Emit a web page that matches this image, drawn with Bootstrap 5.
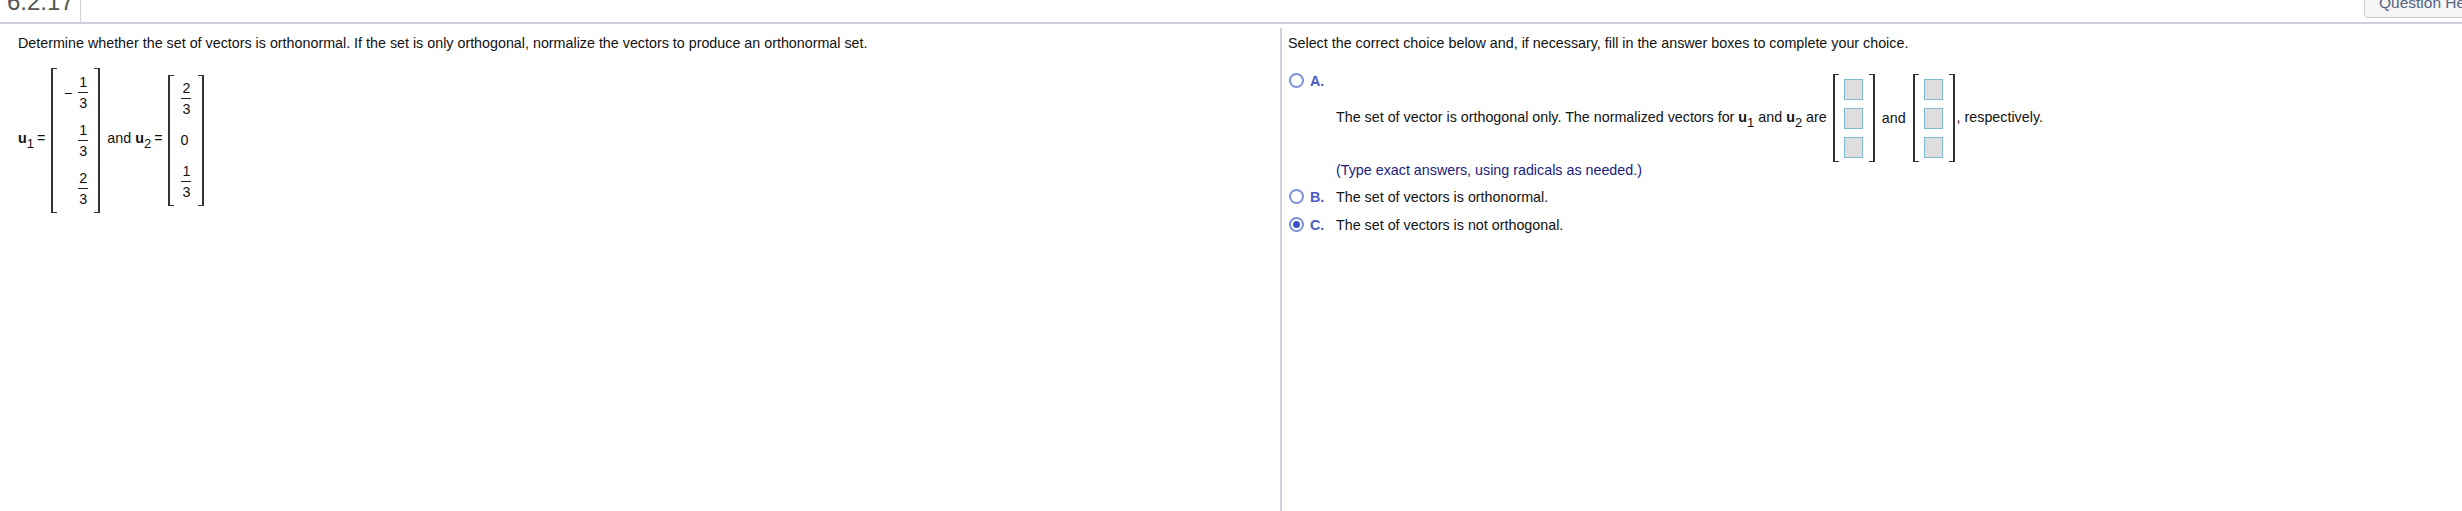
<!DOCTYPE html>
<html lang="en"><head><meta charset="utf-8"><title>6.2.17</title>
<link href="https://cdn.jsdelivr.net/npm/bootstrap@5.3.0/dist/css/bootstrap.min.css" rel="stylesheet">
<style>
html,body{height:100%;overflow:hidden;background:#fff}
body{font-family:"Liberation Sans",Arial,sans-serif;font-size:14.3px;color:#111;line-height:16px}
.top-bar{height:24px;border-bottom:2px solid #cfd2dc;overflow:hidden}
.top-title{width:81px;height:32px;margin-top:-10px;border-right:1px solid #cfd2dc;font-size:24px;line-height:24px;color:#555;padding-left:7px;white-space:nowrap}
.help-btn{width:110px;height:19px;margin-top:-1px;margin-right:-12px;background:#f5f5f5;border:1px solid #ccc;border-radius:0 0 4px 4px;color:#56657f;font-size:15.5px;line-height:15px;padding-left:14px;white-space:nowrap;overflow:hidden}
.help-txt{margin-top:-5px;display:block}
.main-row{height:487px}
.pane-left{width:1280px;flex:none;padding:11px 18px 0}
.pane-right{flex:1;border-left:2px solid #cfd2dc;margin-top:4px;padding:7px 0 0 6px}
.mtx{display:flex;align-items:stretch;flex:none}
.brk{width:6px;flex:none;border:solid #333;border-width:1.5px 0 1.5px 2px}
.brk-r{border-width:1.5px 2px 1.5px 0}
.cells{display:flex;flex-direction:column;justify-content:center;flex:1}
.cell{height:48px;display:flex;align-items:center;justify-content:flex-end;padding-right:6px}
.m2 .cell{height:41.5px;justify-content:center;padding-right:0}
.m2 .cell.zero{padding-right:4px;padding-bottom:2px}
.frac{display:inline-flex;flex-direction:column;align-items:center;width:10px;line-height:15px}
.frac>span:first-child{border-bottom:1px solid #222;width:100%;text-align:center;padding-bottom:2px;margin-bottom:3px}
.vec{font-weight:700;font-size:14.3px}
sub{font-size:13px;bottom:-.35em}
.eq-row{display:flex;align-items:center;margin-top:17px}
.eq-lbl{margin-bottom:5px;white-space:pre}
.m1{width:49px;height:145px;margin-left:6px}
.m2{width:36px;height:131px;margin-left:6px}
.after-m1{margin-left:7px}
.eq-sign{margin-left:3px}
.neg{margin-right:6px}
.ch-row{display:flex;align-items:flex-start;margin-left:1px}
.ch-first{margin-top:22px}
.ch-second{margin-top:11px}
.ch-third{margin-top:12px}
.radio-dot{width:15px;height:15px;border:2px solid #7d90dc;border-radius:50%;flex:none;display:flex;align-items:center;justify-content:center;background:#fff}
.radio-dot.on::after{content:"";width:7px;height:7px;border-radius:50%;background:#3a55c8}
.ch-letter{color:#4a5cc4;font-weight:700;width:32px;padding-left:6px;flex:none}
.ch-body{padding-top:1px}
.ans-line{display:flex;align-items:center}
.ans-text{margin-bottom:2px}
.ans-mtx{width:42px;height:88px}
.ans-box{width:19px;height:21px;background:#dedede;border:1.5px solid #7fbcd2;margin:0 auto 8px;flex:none}
.ans-box:last-child{margin-bottom:0}
.gap-before{margin-left:6px}
.gap-sides{margin:0 7px}
.gap-comma{margin-left:2px}
.hint{color:#1a1a80}
</style></head><body>
<div class="top-bar d-flex justify-content-between">
  <div class="top-title">6.2.17</div>
  <div class="help-btn"><span class="help-txt">Question Help</span></div>
</div>
<div class="main-row d-flex">
  <div class="pane-left">
    <div>Determine whether the set of vectors is orthonormal. If the set is only orthogonal, normalize the vectors to produce an orthonormal set.</div>
    <div class="eq-row">
      <span class="eq-lbl"><span class="vec">u</span><sub>1</sub><span class="eq-sign">=</span></span>
      <div class="mtx m1">
        <div class="brk"></div>
        <div class="cells">
          <div class="cell"><span class="neg">&minus;</span><span class="frac"><span>1</span><span>3</span></span></div>
          <div class="cell"><span class="frac"><span>1</span><span>3</span></span></div>
          <div class="cell"><span class="frac"><span>2</span><span>3</span></span></div>
        </div>
        <div class="brk brk-r"></div>
      </div>
      <span class="eq-lbl after-m1">and&nbsp;<span class="vec">u</span><sub>2</sub><span class="eq-sign">=</span></span>
      <div class="mtx m2">
        <div class="brk"></div>
        <div class="cells">
          <div class="cell"><span class="frac"><span>2</span><span>3</span></span></div>
          <div class="cell zero">0</div>
          <div class="cell"><span class="frac"><span>1</span><span>3</span></span></div>
        </div>
        <div class="brk brk-r"></div>
      </div>
    </div>
  </div>
  <div class="pane-right">
    <div>Select the correct choice below and, if necessary, fill in the answer boxes to complete your choice.</div>
    <div class="ch-row ch-first">
      <span class="radio-dot"></span><span class="ch-letter">A.</span>
      <div class="ch-body">
        <div class="ans-line">
          <span class="ans-text">The set of vector is orthogonal only. The normalized vectors for&nbsp;<span class="vec">u</span><sub>1</sub>&nbsp;and&nbsp;<span class="vec">u</span><sub>2</sub>&nbsp;are</span>
          <div class="mtx ans-mtx gap-before">
            <div class="brk"></div>
            <div class="cells"><div class="ans-box"></div><div class="ans-box"></div><div class="ans-box"></div></div>
            <div class="brk brk-r"></div>
          </div>
          <span class="gap-sides ans-text">and</span>
          <div class="mtx ans-mtx">
            <div class="brk"></div>
            <div class="cells"><div class="ans-box"></div><div class="ans-box"></div><div class="ans-box"></div></div>
            <div class="brk brk-r"></div>
          </div>
          <span class="gap-comma ans-text">, respectively.</span>
        </div>
        <div class="hint">(Type exact answers, using radicals as needed.)</div>
      </div>
    </div>
    <div class="ch-row ch-second"><span class="radio-dot"></span><span class="ch-letter">B.</span><span>The set of vectors is orthonormal.</span></div>
    <div class="ch-row ch-third"><span class="radio-dot on"></span><span class="ch-letter">C.</span><span>The set of vectors is not orthogonal.</span></div>
  </div>
</div>
<script src="https://cdn.jsdelivr.net/npm/bootstrap@5.3.0/dist/js/bootstrap.bundle.min.js"></script>
</body></html>
